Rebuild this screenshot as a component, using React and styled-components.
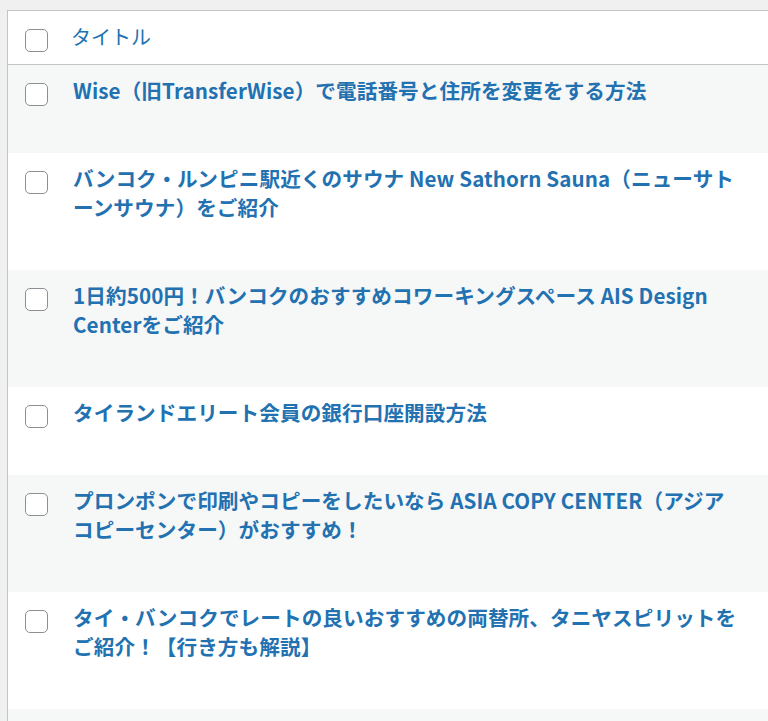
import React from "react";
import styled, { createGlobalStyle } from "styled-components";

const GlobalStyle = createGlobalStyle`
  html, body {
    margin: 0;
    padding: 0;
    background: #f0f0f1;
  }
  body {
    font-family: "Noto Sans CJK JP", "Noto Sans", sans-serif;
  }
`;

const Page = styled.div`
  padding: 10px 0 0 7px;
  height: 721px;
  box-sizing: border-box;
  overflow: hidden;
`;

const Table = styled.div`
  width: calc(100% + 40px);
  background: #fff;
  border-top: 1px solid #c3c4c7;
  border-left: 1px solid #c3c4c7;
`;

const HeaderRow = styled.div`
  display: flex;
  height: 53px;
  border-bottom: 1px solid #c3c4c7;
  background: #fff;
`;

const Row = styled.div`
  display: flex;
  background: ${(p) => (p.$alt ? "#f6f7f7" : "#fff")};
`;

const CheckCell = styled.div`
  flex: 0 0 65px;
  box-sizing: border-box;
  padding: 18px 0 0 17px;
`;

const Checkbox = styled.span`
  display: block;
  width: 23px;
  height: 23px;
  box-sizing: border-box;
  border: 1.5px solid #8c8f94;
  border-radius: 5px;
  background: #fff;
`;

const HeaderLabel = styled.div`
  padding-top: 12px;
  margin-left: -2px;
  font-size: 20px;
  line-height: 28px;
  font-weight: 400;
  color: #2271b1;
`;

const TitleCell = styled.div`
  flex: 1;
  padding: 11px 0 0 0;
`;

const Title = styled.a`
  display: block;
  font-size: 20.6px;
  line-height: 29px;
  font-weight: 700;
  letter-spacing: 0.1px;
  color: #2271b1;
  text-decoration: none;
  white-space: nowrap;
`;

const RowActions = styled.div`
  height: 48px;
`;

const posts = [
  ["Wise（旧TransferWise）で電話番号と住所を変更をする方法"],
  ["バンコク・ルンピニ駅近くのサウナ New Sathorn Sauna（ニューサト", "ーンサウナ）をご紹介"],
  ["1日約500円！バンコクのおすすめコワーキングスペース AIS Design", "Centerをご紹介"],
  ["タイランドエリート会員の銀行口座開設方法"],
  ["プロンポンで印刷やコピーをしたいなら ASIA COPY CENTER（アジア", "コピーセンター）がおすすめ！"],
  ["タイ・バンコクでレートの良いおすすめの両替所、タニヤスピリットを", "ご紹介！【行き方も解説】"],
  [""],
];

export default function App() {
  return (
    <>
      <GlobalStyle />
      <Page>
        <Table>
          <HeaderRow>
            <CheckCell>
              <Checkbox />
            </CheckCell>
            <HeaderLabel>タイトル</HeaderLabel>
          </HeaderRow>
          {posts.map((lines, i) => (
            <Row key={i} $alt={i % 2 === 0}>
              <CheckCell>
                <Checkbox />
              </CheckCell>
              <TitleCell>
                <Title href="#">
                  {lines.map((l, j) => (
                    <React.Fragment key={j}>
                      {j > 0 && <br />}
                      {l}
                    </React.Fragment>
                  ))}
                </Title>
                <RowActions />
              </TitleCell>
            </Row>
          ))}
        </Table>
      </Page>
    </>
  );
}
